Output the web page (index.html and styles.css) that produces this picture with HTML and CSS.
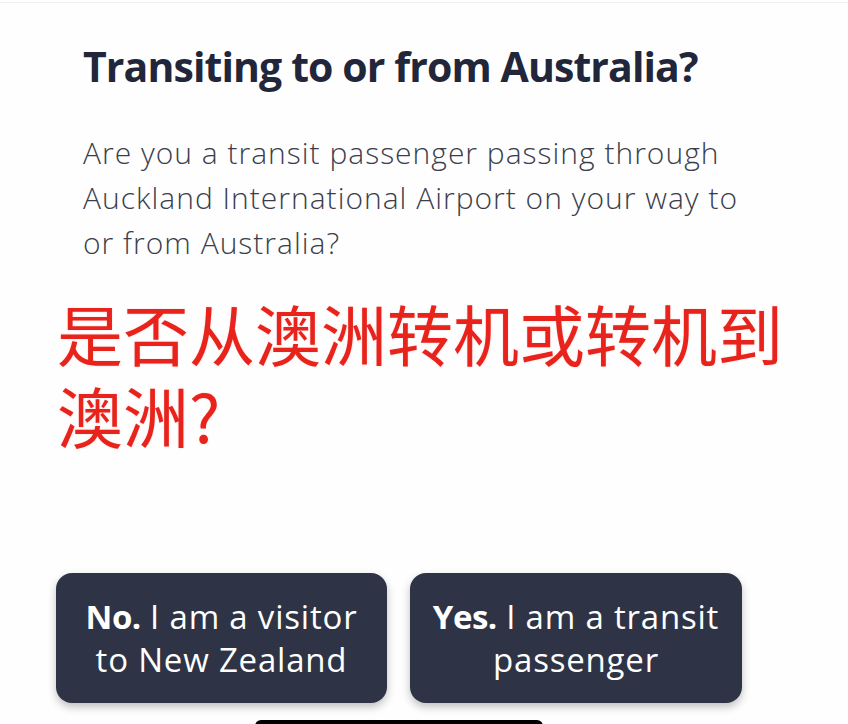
FILE: index.html
```html
<!DOCTYPE html>
<html lang="en">
<head>
  <meta charset="UTF-8" />
  <title>Transit | Auckland Airport</title>
  <link rel="stylesheet" href="styles.css">
</head>
<body>
  <div class="screen">
    <div class="intro">
      <h1>Transiting to or from Australia?</h1>
      <p>Are you a transit passenger passing through Auckland International Airport on your way to or from Australia?</p>
    </div>

    <div class="note">是否从澳洲转机或转机到澳洲?</div>

    <div class="choices">
      <button class="choice"><b>No.</b> I am a visitor<br>to New Zealand</button>
      <button class="choice"><b>Yes.</b> I am a transit<br>passenger</button>
    </div>

    <div class="home-bar"></div>
  </div>
</body>
</html>
```

FILE: styles.css
```css
body {
  margin: 0;
  background: #fefefe;
  font-family: 'Open Sans', 'Noto Sans', sans-serif;
  overflow: hidden;
}

.screen {
  margin-top: 2px;
  border-top: 1px solid #efeff1;
  min-height: 730px;
}

.intro {
  padding: 38px 60px 0 83px;
}

.intro h1 {
  margin: 0;
  font-size: 41px;
  line-height: 50px;
  font-weight: 700;
  letter-spacing: -0.9px;
  color: #22263a;
}

.intro p {
  margin: 39px 0 0;
  max-width: 690px;
  font-size: 30px;
  line-height: 45px;
  font-weight: 300;
  letter-spacing: 1px;
  color: #3b3d4b;
}

.note {
  margin: 26px 0 0;
  padding: 0 50px 0 57px;
  font-family: 'Noto Sans CJK SC', sans-serif;
  font-size: 66px;
  line-height: 82px;
  color: #e8231c;
  text-shadow: 0 0 2px rgba(255, 120, 120, 0.35);
}

.choices {
  display: grid;
  grid-template-columns: 331px 332px;
  gap: 23px;
  margin-top: 118px;
  padding-left: 56px;
}

.choice {
  height: 130px;
  padding: 0;
  border: none;
  border-radius: 16px;
  background: #2e3445;
  color: #fff;
  font-family: 'Open Sans', sans-serif;
  font-size: 33px;
  line-height: 43px;
  font-weight: 400;
  letter-spacing: 0.8px;
  box-shadow: 0 4px 8px rgba(0, 0, 0, 0.25);
}

.choice b {
  font-weight: 700;
  letter-spacing: -0.5px;
}

.home-bar {
  width: 288px;
  height: 10px;
  margin: 17px 0 0 255px;
  background: #000;
  border-radius: 6px 6px 0 0;
}
```
